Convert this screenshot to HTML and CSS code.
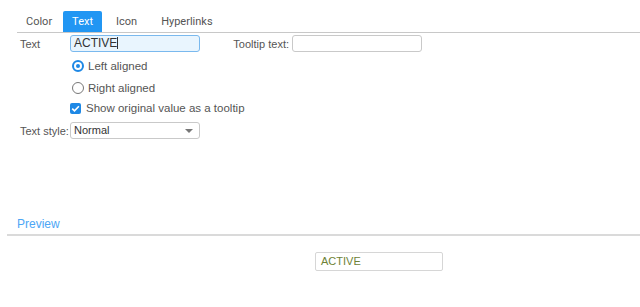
FILE: index.html
```html
<!DOCTYPE html>
<html lang="en">
<head>
    <meta charset="UTF-8">
    <title>Text format</title>
    <link rel="stylesheet" href="styles.css">
</head>
<body>
    <div class="tabs">
        <div class="tab tab-first">Color</div>
        <div class="tab tab-active">Text</div>
        <div class="tab">Icon</div>
        <div class="tab">Hyperlinks</div>
    </div>

    <div class="form">
        <div class="row row-first">
            <span class="label">Text</span>
            <div class="input input-focus">ACTIVE<span class="caret"></span></div>
            <span class="label-tip">Tooltip text:</span>
            <div class="input"></div>
        </div>
        <div class="option option-radio1">
            <span class="radio radio-on"></span>Left aligned
        </div>
        <div class="option option-radio2">
            <span class="radio"></span>Right aligned
        </div>
        <div class="option option-check">
            <span class="check">
                <svg width="11" height="11" viewBox="0 0 11 11"><path d="M2.2 5.6 L4.5 7.9 L8.9 3.2" fill="none" stroke="#fff" stroke-width="1.6"/></svg>
            </span>Show original value as a tooltip
        </div>
        <div class="row row-style">
            <span class="label">Text style:</span>
            <div class="input select">Normal<span class="arrow"></span></div>
        </div>
    </div>

    <div class="preview-title">Preview</div>
    <div class="preview">
        <div class="preview-box">ACTIVE</div>
    </div>
</body>
</html>
```

FILE: styles.css
```css
body {
    margin: 0;
    font-family: "Liberation Sans", Arial, sans-serif;
    font-size: 11px;
    color: #555;
    background: #fff;
    width: 640px;
    height: 307px;
    overflow: hidden;
}

.tabs {
    display: flex;
    gap: 4px;
    margin: 11px 0 0 17px;
    border-bottom: 1px solid #c8c8c8;
    height: 21px;
}

.tab {
    padding: 0 10px;
    line-height: 21px;
    color: #555;
    font-family: Roboto, "Liberation Sans", sans-serif;
    font-size: 11px;
}

.tab-first {
    padding: 0 7px 0 9px;
}

.tab-active {
    padding: 0 9px;
    background: #2196f3;
    color: #fff;
    border-radius: 2px 2px 0 0;
}

.form {
    padding-left: 20px;
}

.row {
    display: flex;
    align-items: center;
    height: 17px;
}

.row-first {
    margin-top: 2px;
}

.label {
    width: 50px;
    color: #555;
}

.label-tip {
    width: 89px;
    text-align: right;
    margin-right: 3px;
    color: #555;
}

.input {
    box-sizing: border-box;
    width: 130px;
    height: 17px;
    border: 1px solid #c9c9c9;
    border-radius: 3px;
    padding: 0 3px;
    line-height: 15px;
    font-size: 12px;
    color: #333;
    position: relative;
}

.input-focus {
    background: #e9f5fe;
    border-color: #7ab9ee;
}

.caret {
    display: inline-block;
    width: 1px;
    height: 12px;
    background: #333;
    vertical-align: -2px;
}

.option {
    display: flex;
    align-items: center;
    padding-left: 50px;
    color: #555;
    font-size: 11.5px;
}

.option-radio1 {
    margin-top: 8px;
    height: 12px;
}

.option-radio2 {
    margin-top: 10px;
    height: 12px;
}

.option-check {
    margin-top: 8px;
    height: 12px;
}

.radio {
    box-sizing: border-box;
    width: 12px;
    height: 12px;
    border: 1px solid #777;
    border-radius: 50%;
    margin: 0 4px 0 2px;
    position: relative;
}

.radio-on {
    border: 2px solid #1e88e5;
}

.radio-on::after {
    content: "";
    position: absolute;
    left: 2px;
    top: 2px;
    width: 4px;
    height: 4px;
    border-radius: 50%;
    background: #1e88e5;
}

.check {
    width: 11px;
    height: 11px;
    background: #1e88e5;
    border-radius: 2px;
    margin-right: 5px;
    display: flex;
}

.row-style {
    margin-top: 8px;
}

.select {
    font-size: 11px;
}

.arrow {
    position: absolute;
    right: 6px;
    top: 6px;
    border-left: 4px solid transparent;
    border-right: 4px solid transparent;
    border-top: 4px solid #777;
}

.preview-title {
    margin: 78px 0 0 17px;
    color: #4da6f5;
    font-size: 12px;
    height: 17px;
}

.preview {
    margin-left: 7px;
    border-top: 2px solid #dadada;
    padding: 16px 0 0 308px;
}

.preview-box {
    box-sizing: border-box;
    width: 128px;
    height: 19px;
    border: 1px solid #d6d6d6;
    border-radius: 2px;
    padding: 0 5px;
    line-height: 17px;
    font-size: 11px;
    color: #6e8236;
}
```
